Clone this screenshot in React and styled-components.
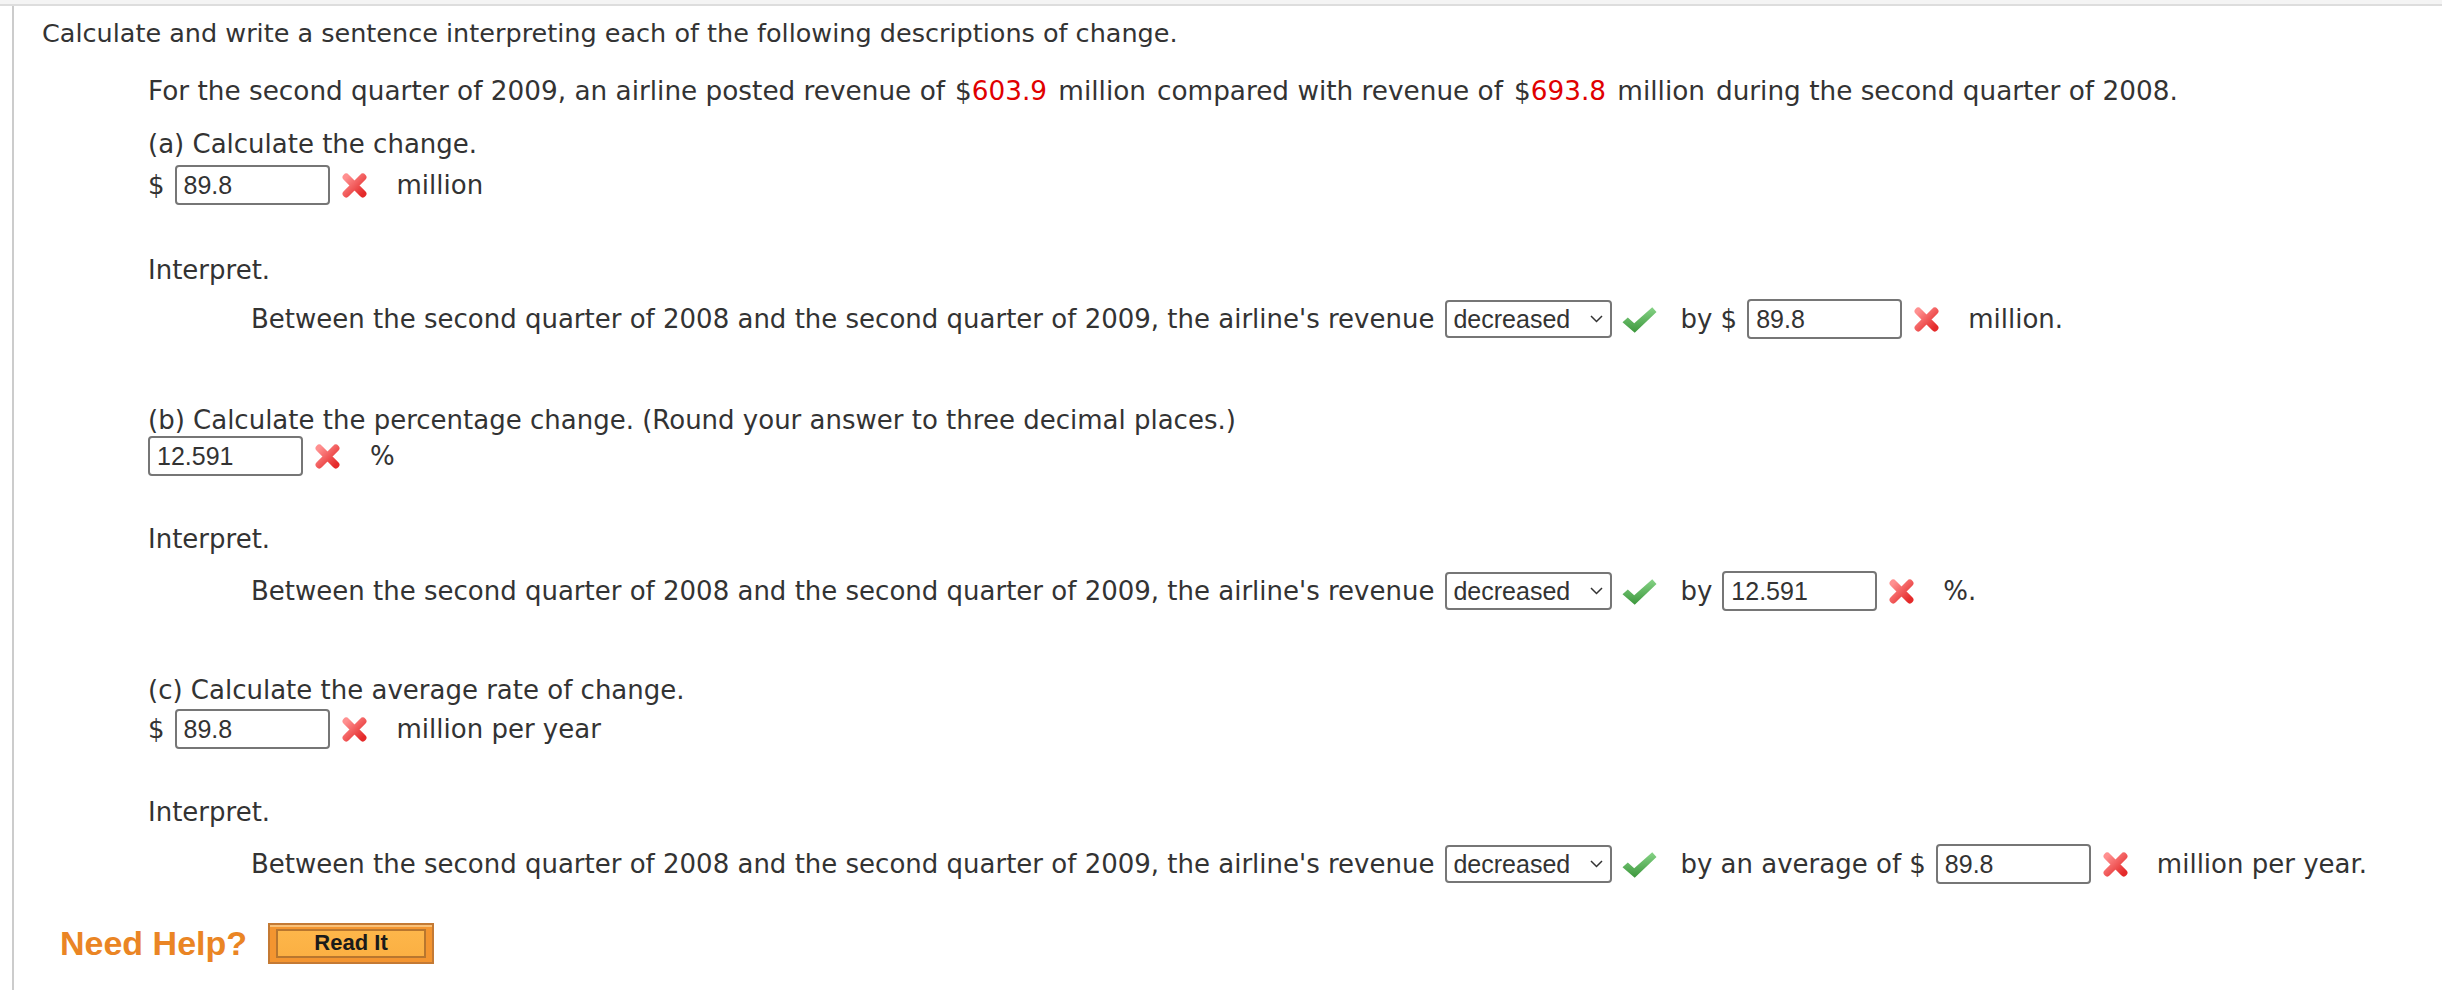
import React from 'react';
import styled, { createGlobalStyle } from 'styled-components';

const GlobalStyle = createGlobalStyle`
  html, body {
    margin: 0;
    padding: 0;
    background: #ffffff;
  }
  body {
    font-family: Verdana, "DejaVu Sans", sans-serif;
    color: #333333;
  }
`;

const TopBand = styled.div`
  height: 4px;
  background: #f4f4f4;
  border-bottom: 2px solid #dddddd;
`;

const Page = styled.div`
  margin-left: 12px;
  border-left: 2px solid #cccccc;
  padding: 7px 0 40px 28px;
  min-height: 940px;
  box-sizing: border-box;
`;

const Line = styled.div`
  display: flex;
  align-items: center;
  height: 40px;
  margin-top: ${(p) => p.$top || 0}px;
  margin-left: ${(p) => p.$indent || 0}px;
  font-size: ${(p) => p.$size || 26}px;
  white-space: nowrap;
`;

const Red = styled.span`
  color: #e00000;
`;

const Gap = styled.span`
  display: inline-block;
  width: ${(p) => p.$w}px;
`;

const Input = styled.div`
  box-sizing: border-box;
  width: 155px;
  height: 40px;
  border: 2px solid #767676;
  border-radius: 4px;
  padding-left: 7px;
  display: flex;
  align-items: center;
  font-family: "Liberation Sans", Arial, sans-serif;
  font-size: 25px;
  color: #333;
  margin-left: ${(p) => p.$ml ?? 10}px;
`;

const Select = styled.div`
  box-sizing: border-box;
  width: 167px;
  height: 38px;
  border: 2px solid #767676;
  border-radius: 4px;
  padding: 0 7px 0 6px;
  display: flex;
  align-items: center;
  justify-content: space-between;
  font-family: "Liberation Sans", Arial, sans-serif;
  font-size: 25px;
  color: #333;
  margin-left: 11px;
`;

const Mark = styled.span`
  display: inline-flex;
  margin-left: ${(p) => p.$ml}px;
  margin-right: ${(p) => p.$mr}px;
`;

const HelpRow = styled.div`
  display: flex;
  align-items: center;
  margin-top: 37px;
  margin-left: 18px;
  height: 44px;
`;

const HelpText = styled.span`
  font-family: "Liberation Sans", Arial, sans-serif;
  font-weight: bold;
  font-size: 34px;
  color: #ea8524;
`;

const ReadIt = styled.div`
  margin-left: 21px;
  box-sizing: border-box;
  width: 166px;
  height: 41px;
  padding: 4px 6px;
  background: #f39530;
  border: 2px solid #c47a34;
  box-shadow: inset 0 2px 0 #f9c27a;
`;

const ReadItInner = styled.div`
  height: 100%;
  box-sizing: border-box;
  border: 2px solid #b8762e;
  background: linear-gradient(#fdb64a, #fbb043);
  display: flex;
  align-items: center;
  justify-content: center;
  font-family: "Liberation Sans", Arial, sans-serif;
  font-weight: bold;
  font-size: 22px;
  color: #1a1a1a;
`;

const Cross = ({ ml = 10, mr = 29 }) => (
  <Mark $ml={ml} $mr={mr}>
    <svg width="29" height="29" viewBox="0 0 28 28">
      <defs>
        <linearGradient id="xg" x1="0" y1="0" x2="1" y2="1">
          <stop offset="0" stopColor="#ff9090" />
          <stop offset="1" stopColor="#e42a2a" />
        </linearGradient>
      </defs>
      <path d="M6 6 L22 22 M22 6 L6 22" stroke="url(#xg)" strokeWidth="7" strokeLinecap="round" fill="none" />
    </svg>
  </Mark>
);

const Check = () => (
  <Mark $ml={8} $mr={21}>
    <svg width="39" height="34" viewBox="0 0 36 32">
      <defs>
        <linearGradient id="cg" x1="0" y1="0" x2="0" y2="1">
          <stop offset="0" stopColor="#86d386" />
          <stop offset="1" stopColor="#3c973c" />
        </linearGradient>
      </defs>
      <path d="M2 19 L7 14.5 L13 20 L30 5 L34 9.5 L13.5 29 Z" fill="url(#cg)" />
    </svg>
  </Mark>
);

const Chevron = () => (
  <svg width="13" height="8" viewBox="0 0 13 8">
    <path d="M1 1 L6.5 6.5 L12 1" stroke="#333" strokeWidth="1.5" fill="none" />
  </svg>
);

const lead = "Between the second quarter of 2008 and the second quarter of 2009, the airline's revenue";

// gaps: [label top, answer row top, interpret top, sentence top]
const parts = [
  {
    label: '(a) Calculate the change.',
    prefix: '$',
    value: '89.8',
    unit: 'million',
    by: 'by $',
    byValue: '89.8',
    end: 'million.',
    gaps: [13, 1, 45, 9],
  },
  {
    label: '(b) Calculate the percentage change. (Round your answer to three decimal places.)',
    prefix: null,
    value: '12.591',
    unit: '%',
    by: 'by',
    byValue: '12.591',
    end: '%.',
    gaps: [61, -4, 43, 12],
  },
  {
    label: '(c) Calculate the average rate of change.',
    prefix: '$',
    value: '89.8',
    unit: 'million per year',
    by: 'by an average of $',
    byValue: '89.8',
    end: 'million per year.',
    gaps: [59, -1, 43, 12],
  },
];

export default function App() {
  return (
    <>
      <GlobalStyle />
      <TopBand />
      <Page>
        <Line $size={25.5}>Calculate and write a sentence interpreting each of the following descriptions of change.</Line>
        <Line $indent={106} $top={18} $size={26.3}>
          For the second quarter of 2009, an airline posted revenue of <Gap $w={10} />$<Red>603.9</Red>
          <Gap $w={3} />&nbsp;million<Gap $w={11} /> compared with revenue of <Gap $w={11} />$<Red>693.8</Red>
          <Gap $w={3} />&nbsp;million<Gap $w={11} /> during the second quarter of 2008.
        </Line>
        {parts.map((p, i) => (
          <React.Fragment key={i}>
            <Line $indent={106} $top={p.gaps[0]}>{p.label}</Line>
            <Line $indent={106} $top={p.gaps[1]}>
              {p.prefix}
              <Input $ml={p.prefix ? 10 : 0}>{p.value}</Input>
              <Cross ml={10} mr={28} />
              {p.unit}
            </Line>
            <Line $indent={106} $top={p.gaps[2]}>Interpret.</Line>
            <Line $indent={209} $top={p.gaps[3]}>
              {lead}
              <Select>
                decreased
                <Chevron />
              </Select>
              <Check />
              {p.by}
              <Input $ml={10}>{p.byValue}</Input>
              <Cross ml={10} mr={27} />
              {p.end}
            </Line>
          </React.Fragment>
        ))}
        <HelpRow>
          <HelpText>Need Help?</HelpText>
          <ReadIt>
            <ReadItInner>Read It</ReadItInner>
          </ReadIt>
        </HelpRow>
      </Page>
    </>
  );
}
